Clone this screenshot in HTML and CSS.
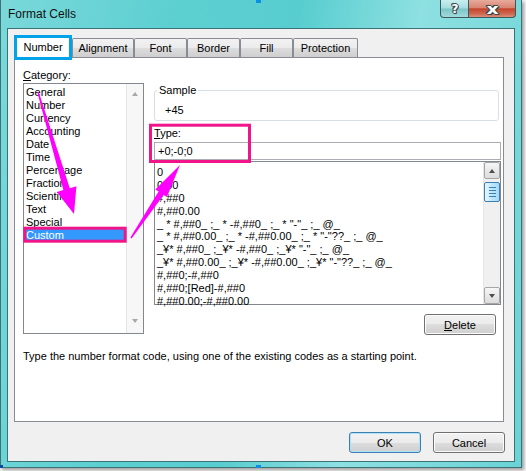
FILE: index.html
```html
<!DOCTYPE html>
<html>
<head>
<meta charset="utf-8">
<title>Format Cells</title>
<link rel="stylesheet" href="styles.css">
</head>
<body>
<div class="window">
  <div class="titlebar">
    <span class="title">Format Cells</span>
    <div class="caption">
      <span class="qmark">?</span>
      <span class="xmark">x</span>
    </div>
  </div>
  <div class="client">
    <div class="tabs">
      <div class="tab active t-number">Number</div>
      <div class="tab t-align">Alignment</div>
      <div class="tab t-font">Font</div>
      <div class="tab t-border">Border</div>
      <div class="tab t-fill">Fill</div>
      <div class="tab t-prot">Protection</div>
    </div>
    <div class="panel">
      <div class="top">
        <div class="left">
          <div class="label cat-label"><u>C</u>ategory:</div>
          <div class="listbox cat">
            <div class="items">
              <div class="item">General</div>
              <div class="item">Number</div>
              <div class="item">Currency</div>
              <div class="item">Accounting</div>
              <div class="item">Date</div>
              <div class="item">Time</div>
              <div class="item">Percentage</div>
              <div class="item">Fraction</div>
              <div class="item">Scientific</div>
              <div class="item">Text</div>
              <div class="item">Special</div>
              <div class="item selected">Custom</div>
            </div>
            <div class="vscroll off">
              <div class="arrow-up-g"></div>
              <div class="arrow-down-g"></div>
            </div>
          </div>
        </div>
        <div class="right">
          <fieldset class="sample">
            <legend>Sample</legend>
            <div class="sample-val">+45</div>
          </fieldset>
          <div class="label type-label"><u>T</u>ype:</div>
          <div class="input">+0;-0;0</div>
          <div class="listbox fmt">
            <div class="items code">
              <div class="item">0</div>
              <div class="item">0.00</div>
              <div class="item">#,##0</div>
              <div class="item">#,##0.00</div>
              <div class="item">_ * #,##0_ ;_ * -#,##0_ ;_ * "-"_ ;_ @_</div>
              <div class="item">_ * #,##0.00_ ;_ * -#,##0.00_ ;_ * "-"??_ ;_ @_</div>
              <div class="item">_¥* #,##0_ ;_¥* -#,##0_ ;_¥* "-"_ ;_ @_</div>
              <div class="item">_¥* #,##0.00_ ;_¥* -#,##0.00_ ;_¥* "-"??_ ;_ @_</div>
              <div class="item">#,##0;-#,##0</div>
              <div class="item">#,##0;[Red]-#,##0</div>
              <div class="item">#,##0.00;-#,##0.00</div>
            </div>
            <div class="vscroll on">
              <div class="sbtn"><div class="arrow-up"></div></div>
              <div class="thumb"><span></span><span></span><span></span><span></span></div>
              <div class="track"></div>
              <div class="sbtn"><div class="arrow-down"></div></div>
            </div>
          </div>
          <div class="btn-row"><div class="btn"><u>D</u>elete</div></div>
        </div>
      </div>
      <div class="help">Type the number format code, using one of the existing codes as a starting point.</div>
    </div>
    <div class="buttons">
      <div class="btn default">OK</div>
      <div class="btn">Cancel</div>
    </div>
  </div>
  <svg class="annot" width="300" height="260" viewBox="0 0 300 260">
    <rect x="15.5" y="36.5" width="55" height="22" fill="none" stroke="#00a2e8" stroke-width="3"/>
    <rect x="24.8" y="228.2" width="100.4" height="13" fill="none" stroke="#f0168a" stroke-width="3"/>
    <rect x="150.5" y="125.2" width="99" height="36.3" fill="none" stroke="#f0168a" stroke-width="3"/>
    <polygon fill="#ff00ff" points="37.3,92.2 38.7,91.8 69.8,188.2 76.4,186.2 74,214 56.8,192.0 63.4,190.1"/>
    <polygon fill="#ff00ff" points="130.4,237.6 158.6,191.6 155.3,189.4 180,165 166.9,197.1 163.6,194.9 131.6,238.4"/>
  </svg>
</div>
<div class="handle h-top"></div>
<div class="handle h-bottom"></div>
<div class="handle h-bl"></div>
</body>
</html>
```

FILE: styles.css
```css
* { box-sizing: border-box; }
html, body { margin: 0; padding: 0; }
body {
  width: 526px;
  height: 471px;
  background: #f4f4f4;
  font-family: "Liberation Sans", Arial, sans-serif;
  font-size: 11px;
  color: #000;
  position: relative;
  overflow: hidden;
}
.window {
  position: relative;
  width: 522px;
  height: 468px;
  display: flex;
  flex-direction: column;
  background: linear-gradient(100deg, #7ad8da 0%, #5ccfd1 30%, #58cdcf 50%, #8ee0e1 70%, #6ad3d5 100%);
  border: 1px solid #3d7276;
  border-top: none;
  box-shadow: 2px 2px 3px rgba(0,0,0,0.35);
}
.titlebar {
  height: 28px;
  flex: none;
  display: flex;
  justify-content: space-between;
  align-items: flex-start;
  padding: 0 5px 0 7px;
}
.title {
  font-size: 12px;
  line-height: 29px;
  color: #111;
}
.caption {
  flex: none;
  width: 76px;
  height: 18px;
  display: grid;
  grid-template-columns: 28px 48px;
  align-items: center;
  justify-items: center;
  border: 1px solid #3a5a5c;
  border-top: none;
  border-radius: 0 0 4px 4px;
  background-image:
    linear-gradient(90deg, transparent 27px, #3a5a5c 27px, #3a5a5c 28px, transparent 28px),
    linear-gradient(#e7ab9c 0%, #d98571 45%, #c4452c 52%, #cd664e 80%, #de8e7a 100%),
    linear-gradient(#c9eeef 0%, #a6dddf 48%, #7cc5c8 52%, #a2dadc 100%);
  background-size: 100% 100%, 48px 100%, 28px 100%;
  background-position: 0 0, 28px 0, 0 0;
  background-repeat: no-repeat;
}
.qmark, .xmark {
  font-family: "DejaVu Sans", sans-serif;
  font-weight: bold;
  color: #fff;
  text-shadow: 1px 0 0 #3d4a4c, -1px 0 0 #3d4a4c, 0 1px 0 #3d4a4c, 0 -1px 0 #3d4a4c, 1px 1px 0 #3d4a4c, -1px -1px 0 #3d4a4c;
}
.qmark { font-size: 12px; line-height: 16px; }
.xmark { font-size: 14px; line-height: 14px; transform: scaleX(1.35); }
.client {
  flex: 1;
  margin: 0 6px 5px 6px;
  border: 1px solid #3b7276;
  background: #f0f0f0;
  padding: 7px 9px 0 6px;
  display: flex;
  flex-direction: column;
}
.tabs {
  height: 21px;
  display: flex;
  align-items: flex-end;
}
.tab {
  height: 19px;
  border: 1px solid #898c95;
  border-bottom: none;
  background: linear-gradient(#f2f2f2 0%, #ebebeb 50%, #dddddd 50%, #cfcfcf 100%);
  text-align: center;
  line-height: 19px;
  border-radius: 2px 2px 0 0;
}
.tab.active {
  height: 22px;
  margin-bottom: -1px;
  background: #fff;
  position: relative;
  z-index: 1;
  line-height: 21px;
}
.t-number { width: 58px; }
.t-align { width: 62px; }
.t-font { width: 53px; }
.t-border { width: 53px; }
.t-fill { width: 53px; }
.t-prot { width: 65px; }
.panel {
  width: 490px;
  height: 365px;
  border: 1px solid #898c95;
  background: #fff;
  padding: 11px 0 0 8px;
}
.top {
  display: flex;
  align-items: flex-start;
}
.left { width: 121px; }
.label {
  height: 13px;
  line-height: 13px;
}
.cat-label { margin-bottom: 1px; }
.listbox {
  border: 1px solid #828790;
  background: #fff;
  display: flex;
}
.listbox .items {
  flex: 1;
  padding-top: 2px;
}
.item {
  height: 13px;
  line-height: 13px;
  padding-left: 2px;
  white-space: pre;
}
.listbox.cat { height: 251px; }
.cat .item.selected {
  background: #3399ff;
  color: #fff;
  margin: 0 1px;
  padding-left: 1px;
}
.vscroll {
  width: 17px;
  flex: none;
  display: flex;
  flex-direction: column;
  background: #f3f3f3;
  border-left: 1px solid #e6e6e6;
}
.vscroll.off {
  justify-content: space-between;
  padding: 8px 0 10px;
  align-items: center;
  background: #f7f7f7;
}
.arrow-up-g, .arrow-up {
  width: 0; height: 0;
  border-left: 3.5px solid transparent;
  border-right: 3.5px solid transparent;
  border-bottom: 4px solid #a8a8a8;
}
.arrow-down-g, .arrow-down {
  width: 0; height: 0;
  border-left: 3.5px solid transparent;
  border-right: 3.5px solid transparent;
  border-top: 4px solid #a8a8a8;
}
.arrow-up { border-bottom-color: #4d4d4d; }
.arrow-down { border-top-color: #4d4d4d; }
.right {
  width: 347px;
  margin-left: 10px;
}
.sample {
  margin: 15px 0 0 0;
  padding: 0 0 0 2px;
  width: 345px;
  height: 37px;
  border: 1px solid #d5dfe5;
  border-radius: 3px;
}
.sample legend {
  padding: 0 2px;
  line-height: 13px;
  height: 13px;
}
.sample-val {
  margin: 7px 0 0 8px;
  line-height: 13px;
}
.type-label {
  margin-top: 6px;
  margin-bottom: 2px;
}
.input {
  height: 18px;
  border: 1px solid #abadb3;
  padding: 1px 0 0 3px;
  line-height: 15px;
}
.listbox.fmt {
  margin-top: 1px;
  height: 144px;
}
.fmt .items { padding-top: 4px; }
.fmt .item { height: 12.9px; line-height: 13px; }
.vscroll.on {
  padding: 0;
  background: #f0f0f0;
}
.sbtn {
  height: 17px;
  border: 1px solid #a6a6a6;
  border-radius: 2px;
  background: linear-gradient(#f6f6f6, #dcdcdc);
  display: flex;
  align-items: center;
  justify-content: center;
}
.thumb {
  margin-top: 3px;
  height: 20px;
  border: 1px solid #3c7fb1;
  border-radius: 2px;
  background: linear-gradient(90deg, #eaf6fd 0%, #bee6fd 50%, #a7d9f5 100%);
  display: flex;
  flex-direction: column;
  align-items: center;
  justify-content: center;
  gap: 2px;
}
.thumb span {
  width: 7px;
  height: 1px;
  background: #3c7fb1;
}
.track { flex: 1; }
.btn-row {
  display: flex;
  justify-content: flex-end;
  margin-top: 9px;
  padding-right: 5px;
}
.btn {
  width: 72px;
  height: 21px;
  border: 1px solid #707070;
  border-radius: 3px;
  background: linear-gradient(#f2f2f2 0%, #ebebeb 50%, #dddddd 50%, #cfcfcf 100%);
  text-align: center;
  line-height: 20px;
  box-shadow: inset 0 0 0 1px #fcfcfc;
}
.btn.default {
  border-color: #3c7fb1;
  box-shadow: inset 0 0 0 1px #b0e0f8;
}
.help {
  margin-top: 15px;
  line-height: 13px;
}
.buttons {
  margin-top: 10px;
  display: flex;
  justify-content: flex-end;
  gap: 12px;
}
.annot {
  position: absolute;
  left: -1px;
  top: 0;
  pointer-events: none;
  z-index: 5;
}
.handle {
  position: absolute;
  width: 5px;
  height: 3px;
  background: #0a8ee8;
  left: 256px;
}
.h-top { top: 0; }
.h-bottom { top: 465px; }
.h-bl { top: 465px; left: 0; width: 3px; height: 3px; background: #0a4a9a; }
```
